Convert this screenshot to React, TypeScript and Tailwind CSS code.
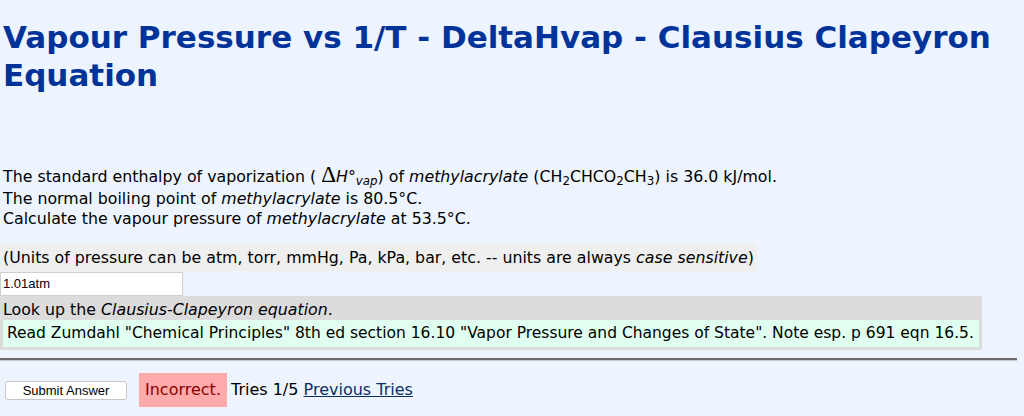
import React from "react";

export default function App() {
  return (
    <div
      className="w-[1024px] h-[416px] overflow-hidden bg-[#edf4fd] text-[#000] text-[15.8px]"
      style={{ fontFamily: '"DejaVu Sans", Verdana, sans-serif' }}
    >
      <h1 className="pt-[18px] pl-[3px] text-[31px] leading-[38px] font-bold text-[#003399]">
        Vapour Pressure vs 1/T - DeltaHvap - Clausius Clapeyron Equation
      </h1>
      <div className="pt-[72px] pl-[3px] leading-[20px]">
        <div className="h-[23px] leading-[22px]">
          The standard enthalpy of vaporization ({" "}
          <span
            className="text-[23px] leading-[10px]"
            style={{ fontFamily: '"Liberation Serif", serif' }}
          >
            Δ
          </span>
          <i>H</i>°<sub className="italic">vap</sub>) of <i>methylacrylate</i> (CH<sub>2</sub>CHCO<sub>2</sub>CH<sub>3</sub>) is 36.0 kJ/mol.
        </div>
        <div>
          The normal boiling point of <i>methylacrylate</i> is 80.5°C.
        </div>
        <div>
          Calculate the vapour pressure of <i>methylacrylate</i> at 53.5°C.
        </div>
      </div>
      <div className="mt-[15px]">
        <div className="inline-block bg-[#efefef] px-[3px] py-[4px] leading-[19px]">
          (Units of pressure can be atm, torr, mmHg, Pa, kPa, bar, etc. -- units are always <i>case sensitive</i>)
        </div>
      </div>
      <div className="mt-[1px] h-[24px] w-[183px] bg-white border border-[#cfcfcf] px-[2px] flex items-center">
        <span className="text-[13px]" style={{ fontFamily: '"Liberation Sans", Arial, sans-serif' }}>
          1.01atm
        </span>
      </div>
      <div className="w-[982px] bg-[#dcdcdc] pt-[4px] pb-[3px]">
        <div className="px-[3px] leading-[20px]">
          Look up the <i>Clausius-Clapeyron equation</i>.
        </div>
        <div className="mx-[3px] bg-[#e0fff0] px-[4px] leading-[27px] whitespace-nowrap text-[15.5px]">
          Read Zumdahl "Chemical Principles" 8th ed section 16.10 "Vapor Pressure and Changes of State". Note esp. p 691 eqn 16.5.
        </div>
      </div>
      <div className="mt-[8px] w-[1017px] h-[3px] bg-[#6b6b6b] border-b border-[#c8c8c8]" />
      <div className="mt-[12px] flex items-center">
        <button
          className="ml-[5px] h-[19px] w-[122px] bg-white border border-[#c6c6c6] rounded-[3px] text-[13px] leading-[17px] text-black"
          style={{ fontFamily: '"Liberation Sans", Arial, sans-serif' }}
        >
          Submit Answer
        </button>
        <span className="ml-[12px] bg-[#ffaaaa] text-[#8b0000] text-[16px] h-[34px] px-[6px] flex items-center">
          Incorrect.
        </span>
        <span className="ml-[4px] text-[16px]">
          Tries 1/5{" "}
          <a href="#" className="text-[#0b2f63] underline">
            Previous Tries
          </a>
        </span>
      </div>
    </div>
  );
}
